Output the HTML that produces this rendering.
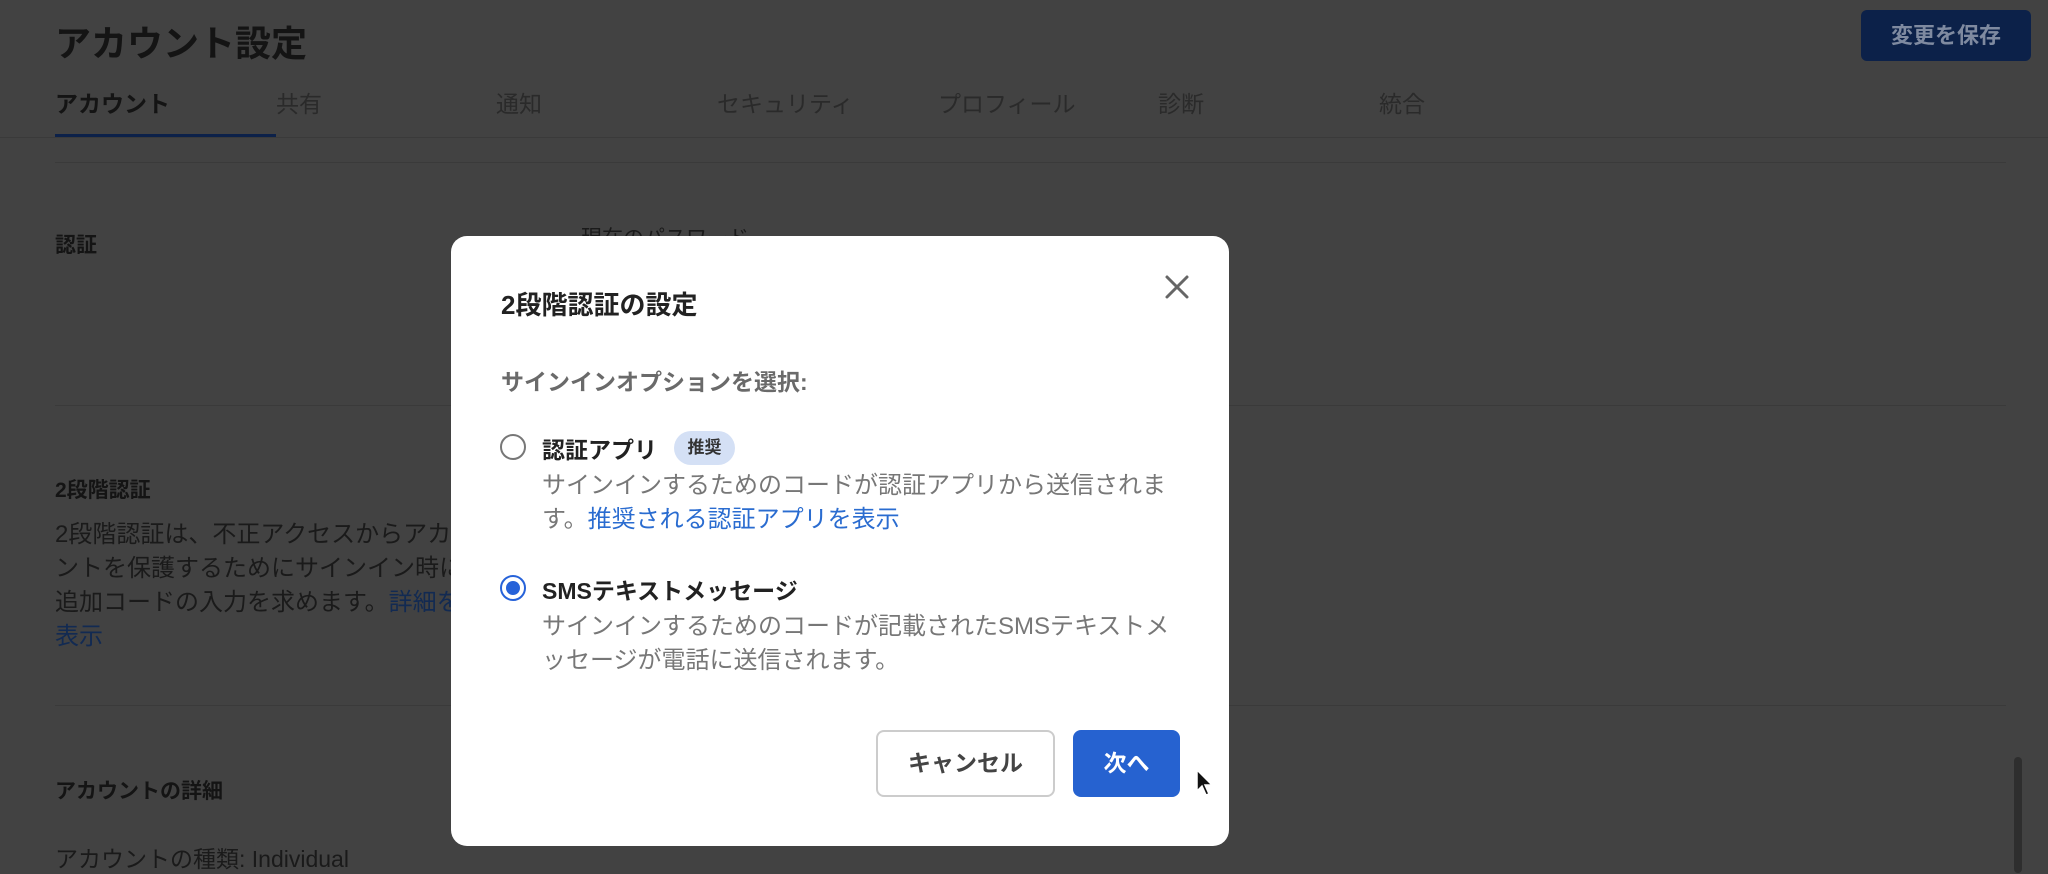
<!DOCTYPE html>
<html><head><meta charset="utf-8"><style>
*{margin:0;padding:0;box-sizing:border-box}
body{width:2048px;height:873px;overflow:hidden;background:#424242;font-family:"Liberation Sans","Noto Sans CJK JP",sans-serif;position:relative;color:#1a1a1a}
.a{position:absolute;white-space:nowrap}
.pg{color:#111}
.tab{position:absolute;top:89px;font-size:23px;color:#2a2a2a;line-height:30px}
.line{position:absolute;left:55px;width:1951px;height:1px;background:#3a3a3a}
.dlg{position:absolute;left:451px;top:236px;width:778px;height:610px;background:#fff;border-radius:16px}
.d{position:absolute;white-space:nowrap}
.desc{font-size:24px;color:#777;line-height:34px}
.radio{position:absolute;width:26px;height:26px;border-radius:50%;border:2px solid #777}
</style></head><body>
<div class="a pg" style="left:55px;top:15px;font-size:36px;font-weight:bold;color:#141414">アカウント設定</div>
<div class="a" style="left:1861px;top:10px;width:170px;height:51px;background:#0c2149;border-radius:6px;color:#7f8aa0;font-size:22px;font-weight:bold;line-height:51px;text-align:center">変更を保存</div>
<div class="tab" style="left:55px;font-weight:bold;color:#141414">アカウント</div>
<div class="tab" style="left:276px">共有</div>
<div class="tab" style="left:496px">通知</div>
<div class="tab" style="left:717px">セキュリティ</div>
<div class="tab" style="left:938px">プロフィール</div>
<div class="tab" style="left:1158px">診断</div>
<div class="tab" style="left:1379px">統合</div>
<div class="a" style="left:55px;top:134px;width:221px;height:3px;background:#0c2149"></div>
<div class="a" style="left:0;top:137px;width:2048px;height:1px;background:#3a3a3a"></div>
<div class="line" style="top:162px"></div>
<div class="line" style="top:405px"></div>
<div class="line" style="top:705px"></div>
<div class="a" style="left:55px;top:229px;font-size:21px;font-weight:bold;color:#141414">認証</div>
<div class="a" style="left:581px;top:222px;font-size:21px;color:#1a1a1a">現在のパスワード</div>
<div class="a" style="left:55px;top:474px;font-size:21px;font-weight:bold;color:#141414">2段階認証</div>
<div class="a" style="left:55px;top:518px;font-size:24px;line-height:34px;color:#1a1a1a">2段階認証は、不正アクセスからアカ<br>ントを保護するためにサインイン時に<br>追加コードの入力を求めます。<span style="color:#122a52">詳細を</span><br><span style="color:#122a52">表示</span></div>
<div class="a" style="left:55px;top:775px;font-size:21px;font-weight:bold;color:#141414">アカウントの詳細</div>
<div class="a" style="left:55px;top:840px;font-size:23px;color:#1a1a1a">アカウントの種類: Individual</div>
<div class="a" style="left:2014px;top:757px;width:8px;height:116px;background:#2e2e2e;border-radius:4px"></div>

<div class="dlg">
<div class="d" style="left:50px;top:49px;font-size:26px;font-weight:bold;color:#222">2段階認証の設定</div>
<svg class="d" style="left:713px;top:38px" width="26" height="26" viewBox="0 0 26 26"><path d="M3 3L23 23M23 3L3 23" stroke="#666" stroke-width="3" stroke-linecap="round"/></svg>
<div class="d" style="left:50px;top:127px;font-size:23px;font-weight:bold;color:#6a6a6a">サインインオプションを選択:</div>
<div class="radio" style="left:49px;top:198px"></div>
<div class="d" style="left:91px;top:195px;font-size:23px;font-weight:bold;color:#222">認証アプリ</div>
<div class="d" style="left:223px;top:195px;width:61px;height:34px;background:#d4e0f5;border-radius:17px;font-size:17px;font-weight:bold;color:#333;text-align:center;line-height:34px">推奨</div>
<div class="d desc" style="left:91px;top:233px">サインインするためのコードが認証アプリから送信されま<br>す。<span style="color:#2a6cd0">推奨される認証アプリを表示</span></div>
<div class="radio" style="left:49px;top:339px;border-color:#2662d9"><div style="position:absolute;left:4px;top:4px;width:14px;height:14px;border-radius:50%;background:#2662d9"></div></div>
<div class="d" style="left:91px;top:336px;font-size:23px;font-weight:bold;color:#222">SMSテキストメッセージ</div>
<div class="d desc" style="left:91px;top:374px">サインインするためのコードが記載されたSMSテキストメ<br>ッセージが電話に送信されます。</div>
<div class="d" style="left:425px;top:494px;width:179px;height:67px;border:2px solid #ccc;border-radius:8px;font-size:23px;font-weight:bold;color:#444;text-align:center;line-height:63px">キャンセル</div>
<div class="d" style="left:622px;top:494px;width:107px;height:67px;background:#2662d0;border-radius:8px;font-size:23px;font-weight:bold;color:#fff;text-align:center;line-height:67px">次へ</div>
</div>
<svg class="a" style="left:1195px;top:768px" width="20" height="30" viewBox="0 0 20 30"><path d="M2 2L2 23L7 18L11 27L14 26L10 17L17 17Z" fill="#111" stroke="#fff" stroke-width="1.5"/></svg>
</body></html>
